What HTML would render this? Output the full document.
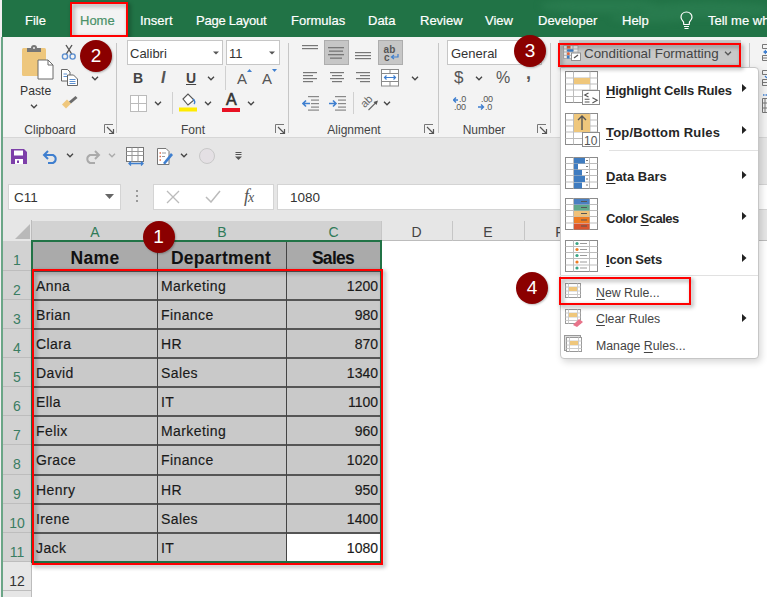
<!DOCTYPE html><html><head><meta charset="utf-8"><style>
*{margin:0;padding:0;box-sizing:border-box}
html,body{width:767px;height:597px;overflow:hidden;background:#fff;font-family:"Liberation Sans",sans-serif;position:relative}
.a{position:absolute}
.t{position:absolute;white-space:nowrap;line-height:1}
.tab{position:absolute;top:13.5px;font-size:13px;color:#fff;white-space:nowrap;line-height:1;-webkit-text-stroke:0.2px currentColor}
.glabel{position:absolute;top:124px;font-size:12px;color:#444;white-space:nowrap;line-height:1}
.circ{position:absolute;border-radius:50%;background:#8b0000;color:#fff;font-size:19px;text-align:center;box-shadow:1px 1px 2px rgba(0,0,0,.25)}
.redbox{position:absolute;border:2px solid #f00;filter:drop-shadow(2px 2px 2px rgba(0,0,0,.45))}
.cell{position:absolute;font-size:14px;color:#1a1a1a;white-space:nowrap;line-height:1;-webkit-text-stroke:0.15px #1a1a1a}
.mi{position:absolute;font-size:13px;font-weight:bold;color:#262626;white-space:nowrap;line-height:1}
.mi2{position:absolute;font-size:12.3px;color:#444;white-space:nowrap;line-height:1}
u{text-decoration:underline;text-underline-offset:2px}
</style></head><body>
<div class="a" style="left:0px;top:0px;width:767px;height:597px;background:#f2eff2"></div>
<div class="a" style="left:1.5px;top:0px;width:766px;height:37px;background:#217346"></div>
<div class="a" style="left:520px;top:0;width:247px;height:36px;overflow:hidden"><svg width="247" height="36" style="filter:blur(3px)"><g fill="#2b7d51" opacity="0.8"><ellipse cx="80" cy="6" rx="60" ry="7"/><ellipse cx="190" cy="10" rx="70" ry="8"/><ellipse cx="130" cy="18" rx="40" ry="4"/></g></svg></div>
<div class="tab" style="left:25px">File</div>
<div class="tab" style="left:140px">Insert</div>
<div class="tab" style="left:196px;letter-spacing:-0.25px">Page Layout</div>
<div class="tab" style="left:291px">Formulas</div>
<div class="tab" style="left:368px">Data</div>
<div class="tab" style="left:420px">Review</div>
<div class="tab" style="left:485px">View</div>
<div class="tab" style="left:538px">Developer</div>
<div class="tab" style="left:622px">Help</div>
<div class="tab" style="left:708px">Tell me wh</div>
<svg class="a" style="left:680px;top:11px;" width="13" height="19" viewBox="0 0 13 19"><path d="M6.5 1 C3 1 1 3.5 1 6.3 C1 8.5 2.5 9.8 3.5 11 L3.8 13.5 L9.2 13.5 L9.5 11 C10.5 9.8 12 8.5 12 6.3 C12 3.5 10 1 6.5 1 Z M4 15.5 H9 M4.5 17.5 H8.5" fill="none" stroke="#fff" stroke-width="1.2"/></svg>
<div class="a" style="left:71px;top:3px;width:56px;height:34px;background:#f3f3f3"></div>
<div class="tab" style="left:80px;color:#4a9169">Home</div>
<div class="redbox" style="left:70px;top:2px;width:58px;height:35px"></div>
<div class="a" style="left:1px;top:37px;width:2px;height:560px;background:#6aa586"></div>
<div class="a" style="left:3px;top:37px;width:764px;height:101px;background:#f3f3f3;border-bottom:1px solid #d6d6d6"></div>
<div class="a" style="left:116px;top:43px;width:1px;height:90px;background:#c6c6c6"></div>
<div class="a" style="left:288px;top:43px;width:1px;height:90px;background:#c6c6c6"></div>
<div class="a" style="left:438px;top:43px;width:1px;height:90px;background:#c6c6c6"></div>
<div class="a" style="left:550px;top:43px;width:1px;height:90px;background:#c6c6c6"></div>
<div class="a" style="left:749px;top:43px;width:1px;height:90px;background:#c6c6c6"></div>
<div class="glabel" style="left:50px;transform:translateX(-50%)">Clipboard</div>
<div class="glabel" style="left:193px;transform:translateX(-50%)">Font</div>
<div class="glabel" style="left:354px;transform:translateX(-50%)">Alignment</div>
<div class="glabel" style="left:484px;transform:translateX(-50%)">Number</div>
<svg class="a" style="left:104px;top:124px;" width="11" height="10" viewBox="0 0 11 10"><path d="M0.5 9 V0.5 H9" fill="none" stroke="#777" stroke-width="1"/><path d="M3 3 L9 9 M9.5 5 V9.5 H5" fill="none" stroke="#555" stroke-width="1.2"/></svg>
<svg class="a" style="left:275px;top:124px;" width="11" height="10" viewBox="0 0 11 10"><path d="M0.5 9 V0.5 H9" fill="none" stroke="#777" stroke-width="1"/><path d="M3 3 L9 9 M9.5 5 V9.5 H5" fill="none" stroke="#555" stroke-width="1.2"/></svg>
<svg class="a" style="left:424px;top:124px;" width="11" height="10" viewBox="0 0 11 10"><path d="M0.5 9 V0.5 H9" fill="none" stroke="#777" stroke-width="1"/><path d="M3 3 L9 9 M9.5 5 V9.5 H5" fill="none" stroke="#555" stroke-width="1.2"/></svg>
<svg class="a" style="left:537px;top:124px;" width="11" height="10" viewBox="0 0 11 10"><path d="M0.5 9 V0.5 H9" fill="none" stroke="#777" stroke-width="1"/><path d="M3 3 L9 9 M9.5 5 V9.5 H5" fill="none" stroke="#555" stroke-width="1.2"/></svg>
<svg class="a" style="left:20px;top:44px;" width="36" height="36" viewBox="0 0 36 36">
<rect x="2" y="4" width="24" height="28" rx="1.5" fill="#eec77d"/>
<path d="M7 8 V4 H11 A3 3 0 0 1 17 4 H21 V8 Z" fill="#767676"/><circle cx="14" cy="4" r="1" fill="#eee"/>
<path d="M18 16 H28 L33 21 V35 H18 Z" fill="#fff" stroke="#6b6b6b" stroke-width="1"/>
<path d="M28 16 V21 H33" fill="none" stroke="#6b6b6b" stroke-width="1"/></svg>
<div class="t" style="left:20px;top:84.5px;font-size:12.2px;color:#333">Paste</div>
<svg class="a" style="left:30px;top:103px;" width="8" height="6" viewBox="0 0 8 6"><path d="M1 1.8 L4 4.8 L7 1.8" fill="none" stroke="#444" stroke-width="1.3"/></svg>
<svg class="a" style="left:60px;top:43px;" width="18" height="18" viewBox="0 0 18 18"><path d="M6 2 L12 11.5 M12 2 L6 11.5" stroke="#555" stroke-width="1.4" fill="none"/><circle cx="5" cy="13.5" r="2.6" fill="none" stroke="#5b8fd0" stroke-width="1.4"/><circle cx="12.6" cy="13.5" r="2.6" fill="none" stroke="#5b8fd0" stroke-width="1.4"/></svg>
<svg class="a" style="left:61px;top:69px;" width="18" height="18" viewBox="0 0 18 18"><path d="M0.5 0.5 H6.5 L9 3 V12 H0.5 Z" fill="#fff" stroke="#666" stroke-width="1"/><path d="M2.5 5 H6 M2.5 7.5 H6" stroke="#5b8fd0" stroke-width="1"/><path d="M6.5 6 H12.5 L16.5 10 V16.5 H6.5 Z" fill="#fff" stroke="#666" stroke-width="1"/><path d="M8.5 10.5 H14.5 M8.5 12.5 H14.5 M8.5 14.5 H14.5" stroke="#5b8fd0" stroke-width="1"/></svg>
<svg class="a" style="left:61px;top:95px;" width="18" height="16" viewBox="0 0 18 16"><path d="M1 9.5 L6 4.5 L10 8.5 L5 13.5 Z" fill="#efc77c"/><path d="M8 6.5 L14.5 1 L16.5 3 L10 8.5 Z" fill="#6b6b6b"/></svg>
<svg class="a" style="left:91px;top:75px;" width="8" height="6" viewBox="0 0 8 6"><path d="M1 1.8 L4 4.8 L7 1.8" fill="none" stroke="#444" stroke-width="1.3"/></svg>
<div class="circ" style="left:80px;top:40px;width:32px;height:32px;line-height:32px">2</div>
<div class="a" style="left:127px;top:40px;width:96px;height:25px;background:#fff;border:1px solid #c6c6c6"></div>
<div class="t" style="left:130px;top:47px;font-size:13px;color:#333">Calibri</div>
<svg class="a" style="left:213px;top:51px;" width="6" height="4" viewBox="0 0 6 4"><path d="M0 0.5 H6 L3 3.5 Z" fill="#555"/></svg>
<div class="a" style="left:226px;top:40px;width:54px;height:25px;background:#fff;border:1px solid #c6c6c6"></div>
<div class="t" style="left:229px;top:47px;font-size:13px;color:#333">11</div>
<svg class="a" style="left:269px;top:51px;" width="6" height="4" viewBox="0 0 6 4"><path d="M0 0.5 H6 L3 3.5 Z" fill="#555"/></svg>
<div class="t" style="left:133px;top:71px;font-size:14px;font-weight:bold;color:#444">B</div>
<div class="t" style="left:161px;top:70px;font-size:16px;font-style:italic;font-weight:bold;color:#555">I</div>
<div class="t" style="left:186px;top:71px;font-size:14px;font-weight:bold;color:#444;text-decoration:underline">U</div>
<svg class="a" style="left:207px;top:75px;" width="8" height="6" viewBox="0 0 8 6"><path d="M1 1.8 L4 4.8 L7 1.8" fill="none" stroke="#444" stroke-width="1.3"/></svg>
<div class="a" style="left:225px;top:66px;width:1px;height:24px;background:#d0d0d0"></div>
<div class="t" style="left:237px;top:71px;font-size:15px;color:#555">A</div>
<svg class="a" style="left:247px;top:69px;" width="5" height="3" viewBox="0 0 5 3"><path d="M0 3 L2.5 0 L5 3 Z" fill="#3f7fcf"/></svg>
<div class="t" style="left:262px;top:71px;font-size:15px;color:#555">A</div>
<svg class="a" style="left:272px;top:69px;" width="5" height="3" viewBox="0 0 5 3"><path d="M0 0 L2.5 3 L5 0 Z" fill="#3f7fcf"/></svg>
<svg class="a" style="left:130px;top:95px;" width="17" height="17" viewBox="0 0 17 17"><rect x="0.5" y="0.5" width="16" height="16" fill="#fff" stroke="#bbb"/><path d="M8.5 0.5 V16.5 M0.5 8.5 H16.5" stroke="#bbb"/></svg>
<svg class="a" style="left:154px;top:100px;" width="8" height="6" viewBox="0 0 8 6"><path d="M1 1.8 L4 4.8 L7 1.8" fill="none" stroke="#444" stroke-width="1.3"/></svg>
<div class="a" style="left:172px;top:92px;width:1px;height:22px;background:#d0d0d0"></div>
<svg class="a" style="left:179px;top:93px;" width="18" height="19" viewBox="0 0 18 19"><path d="M4 6 L9 1 L15 7 L9 12 Z" fill="#fff" stroke="#555" stroke-width="1.1"/><path d="M14 6 Q17 9 15 11" fill="none" stroke="#3f7fcf" stroke-width="1.4"/><rect x="0" y="14.5" width="18" height="4" fill="#ffeb00"/></svg>
<svg class="a" style="left:204px;top:100px;" width="8" height="6" viewBox="0 0 8 6"><path d="M1 1.8 L4 4.8 L7 1.8" fill="none" stroke="#444" stroke-width="1.3"/></svg>
<div class="t" style="left:226px;top:92px;font-size:16px;color:#333;-webkit-text-stroke:0.6px #333">A</div>
<div class="a" style="left:222px;top:108px;width:18px;height:4px;background:#e81123"></div>
<svg class="a" style="left:247px;top:100px;" width="8" height="6" viewBox="0 0 8 6"><path d="M1 1.8 L4 4.8 L7 1.8" fill="none" stroke="#444" stroke-width="1.3"/></svg>
<svg class="a" style="left:302px;top:45px;" width="16" height="6" viewBox="0 0 16 6"><rect x="0.0" y="0" width="16" height="1.2" fill="#777"/><rect x="0.0" y="3" width="16" height="1.2" fill="#777"/></svg>
<div class="a" style="left:324px;top:40px;width:25px;height:25px;background:#c6c6c6;border:1px solid #adadad"></div>
<svg class="a" style="left:328px;top:47px;" width="16" height="13" viewBox="0 0 16 13"><rect x="0" y="0" width="16" height="1.3" fill="#777"/><rect x="1" y="3.5" width="14" height="1.3" fill="#777"/><rect x="0" y="7" width="16" height="1.3" fill="#777"/><rect x="2" y="10.5" width="12" height="1.3" fill="#777"/></svg>
<svg class="a" style="left:355px;top:52px;" width="16" height="9" viewBox="0 0 16 9"><rect x="0.0" y="0" width="16" height="1.2" fill="#777"/><rect x="0.0" y="3" width="16" height="1.2" fill="#777"/><rect x="0.0" y="6" width="16" height="1.2" fill="#777"/></svg>
<div class="a" style="left:378px;top:40px;width:25px;height:25px;background:#c6c6c6;border:1px solid #adadad"></div>
<div class="t" style="left:383.5px;top:45px;font-size:10px;font-weight:bold;color:#555;letter-spacing:0.3px">ab</div>
<div class="t" style="left:384px;top:53px;font-size:10px;font-weight:bold;color:#555">c</div>
<svg class="a" style="left:390px;top:54px;" width="9" height="7" viewBox="0 0 9 7"><path d="M8 0 V3 H2 M4 1 L1.5 3 L4 5" fill="none" stroke="#3f7fcf" stroke-width="1.2"/></svg>
<svg class="a" style="left:303px;top:72px;" width="14" height="12" viewBox="0 0 14 12"><rect x="0" y="0" width="14" height="1.2" fill="#777"/><rect x="0" y="3" width="10" height="1.2" fill="#777"/><rect x="0" y="6" width="14" height="1.2" fill="#777"/><rect x="0" y="9" width="10" height="1.2" fill="#777"/></svg>
<svg class="a" style="left:330px;top:72px;" width="14" height="12" viewBox="0 0 14 12"><rect x="0.0" y="0" width="14" height="1.2" fill="#777"/><rect x="2.0" y="3" width="10" height="1.2" fill="#777"/><rect x="0.0" y="6" width="14" height="1.2" fill="#777"/><rect x="2.0" y="9" width="10" height="1.2" fill="#777"/></svg>
<svg class="a" style="left:356px;top:72px;" width="14" height="12" viewBox="0 0 14 12"><rect x="0" y="0" width="14" height="1.2" fill="#777"/><rect x="4" y="3" width="10" height="1.2" fill="#777"/><rect x="0" y="6" width="14" height="1.2" fill="#777"/><rect x="4" y="9" width="10" height="1.2" fill="#777"/></svg>
<svg class="a" style="left:381px;top:69px;" width="18" height="18" viewBox="0 0 18 18"><rect x="0.5" y="0.5" width="17" height="16.5" fill="#fff" stroke="#8a8a8a"/><path d="M0.5 4.5 H17.5 M0.5 12.5 H17.5 M9 0.5 V4.5 M9 12.5 V17" stroke="#8a8a8a"/><path d="M3.5 8.5 H14.5 M5.5 6.5 L3.5 8.5 L5.5 10.5 M12.5 6.5 L14.5 8.5 L12.5 10.5" fill="none" stroke="#3f7fcf" stroke-width="1.2"/></svg>
<svg class="a" style="left:411px;top:75px;" width="8" height="6" viewBox="0 0 8 6"><path d="M1 1.8 L4 4.8 L7 1.8" fill="none" stroke="#444" stroke-width="1.3"/></svg>
<svg class="a" style="left:302px;top:96px;" width="17" height="15" viewBox="0 0 17 15"><rect x="6" y="0" width="11" height="1.2" fill="#888"/><rect x="9" y="3.5" width="8" height="1.2" fill="#888"/><rect x="9" y="7" width="8" height="1.2" fill="#888"/><rect x="9" y="10.5" width="8" height="1.2" fill="#888"/><rect x="6" y="13.5" width="11" height="1.2" fill="#888"/><path d="M8 7.5 H1 M4 4.5 L1 7.5 L4 10.5" fill="none" stroke="#3f7fcf" stroke-width="1.6"/></svg>
<svg class="a" style="left:329px;top:96px;" width="17" height="15" viewBox="0 0 17 15"><rect x="6" y="0" width="11" height="1.2" fill="#888"/><rect x="9" y="3.5" width="8" height="1.2" fill="#888"/><rect x="9" y="7" width="8" height="1.2" fill="#888"/><rect x="9" y="10.5" width="8" height="1.2" fill="#888"/><rect x="6" y="13.5" width="11" height="1.2" fill="#888"/><path d="M0 7.5 H7 M4 4.5 L7 7.5 L4 10.5" fill="none" stroke="#3f7fcf" stroke-width="1.6"/></svg>
<div class="a" style="left:353px;top:92px;width:1px;height:22px;background:#d0d0d0"></div>
<svg class="a" style="left:355px;top:90px;" width="26" height="24" viewBox="0 0 26 24"><text x="11.5" y="15" font-size="11" fill="#666" font-family="Liberation Sans" text-anchor="middle" transform="rotate(-45 11.5 11.5)">ab</text><path d="M13.5 20 L21 12.5" fill="none" stroke="#666" stroke-width="1.1"/><path d="M23 10.5 L18.5 12 L21.5 15 Z" fill="#555"/></svg>
<svg class="a" style="left:383px;top:100px;" width="8" height="6" viewBox="0 0 8 6"><path d="M1 1.8 L4 4.8 L7 1.8" fill="none" stroke="#444" stroke-width="1.3"/></svg>
<div class="a" style="left:447px;top:40px;width:95px;height:25px;background:#fff;border:1px solid #c6c6c6"></div>
<div class="t" style="left:451px;top:47px;font-size:13px;color:#333">General</div>
<div class="t" style="left:454px;top:69px;font-size:17px;color:#555">$</div>
<svg class="a" style="left:475px;top:75px;" width="8" height="6" viewBox="0 0 8 6"><path d="M1 1.8 L4 4.8 L7 1.8" fill="none" stroke="#444" stroke-width="1.3"/></svg>
<div class="t" style="left:496px;top:70px;font-size:16px;color:#555">%</div>
<div class="t" style="left:526px;top:64px;font-size:18px;font-weight:bold;color:#555">,</div>
<div class="t" style="left:459px;top:95px;font-size:9px;color:#555;letter-spacing:-0.3px">.0</div>
<div class="t" style="left:454px;top:103px;font-size:9px;color:#555;letter-spacing:-0.3px">.00</div>
<svg class="a" style="left:453px;top:97px;" width="6" height="6" viewBox="0 0 6 6"><path d="M5 3 H0.5 M3 0.5 L0.5 3 L3 5.5" fill="none" stroke="#3f7fcf" stroke-width="1.4"/></svg>
<div class="t" style="left:481px;top:95px;font-size:9px;color:#555;letter-spacing:-0.3px">.00</div>
<div class="t" style="left:485px;top:103px;font-size:9px;color:#555;letter-spacing:-0.3px">.0</div>
<svg class="a" style="left:478px;top:104px;" width="7" height="6" viewBox="0 0 7 6"><path d="M0 3 H5.5 M3 0.5 L5.5 3 L3 5.5" fill="none" stroke="#3f7fcf" stroke-width="1.4"/></svg>
<div class="circ" style="left:514px;top:35px;width:32px;height:32px;line-height:32px">3</div>
<div class="a" style="left:559px;top:40px;width:182px;height:27px;background:#c8c8c8"></div>
<svg class="a" style="left:563px;top:45px;" width="18" height="16" viewBox="0 0 18 16"><path d="M0.5 0.5 H15 V13.5 H0.5 Z M0.5 4 H15 M0.5 7 H15 M0.5 10.3 H15 M4 0.5 V13.5 M10 0.5 V13.5" fill="#f4f4f4" stroke="#aaa" stroke-width="0.9"/><rect x="4" y="0.8" width="3.5" height="2.8" fill="#e0653e"/><rect x="4" y="4.2" width="6.5" height="2.6" rx="1" fill="#3f7cc0"/><rect x="4" y="7.3" width="2.8" height="2.8" rx="1.2" fill="#e0653e"/><rect x="4" y="10.5" width="2.6" height="3" fill="#3f7cc0"/><rect x="8.5" y="8" width="9" height="7.5" fill="#fff" stroke="#888" stroke-width="0.9"/><path d="M11 13 L15 10" stroke="#555" stroke-width="1.3"/></svg>
<div class="t" style="left:584px;top:46.5px;font-size:13.4px;color:#444">Conditional Formatting</div>
<svg class="a" style="left:724px;top:50px;" width="8" height="6" viewBox="0 0 8 6"><path d="M1 1.8 L4 4.8 L7 1.8" fill="none" stroke="#555" stroke-width="1.3"/></svg>
<svg class="a" style="left:762px;top:44px;" width="5" height="17" viewBox="0 0 5 17"><path d="M0.5 0.5 H5 M0.5 4.5 H5 M0.5 0.5 V4.5" stroke="#777" fill="none"/><path d="M1 8 L4 5.5 V10.5 Z" fill="#3f7fcf"/><rect x="3" y="7" width="2" height="2" fill="#3f7fcf"/><path d="M0.5 11.5 H5 M0.5 16.5 H5 M0.5 11.5 V16.5 M0.5 14 H5" stroke="#777" fill="none"/></svg>
<svg class="a" style="left:762px;top:70px;" width="5" height="16" viewBox="0 0 5 16"><path d="M0.5 0.5 H5 M0.5 4.5 H5 M0.5 0.5 V4.5" stroke="#777" fill="none"/><path d="M3 6 L5 8" stroke="#3f7fcf" stroke-width="1.2"/><path d="M0.5 9.5 H5 M0.5 15.5 H5 M0.5 9.5 V15.5 M0.5 12.5 H5" stroke="#777" fill="none"/></svg>
<svg class="a" style="left:762px;top:94px;" width="5" height="19" viewBox="0 0 5 19"><path d="M1 1 H5" stroke="#3f7fcf" stroke-width="1.5" stroke-dasharray="1.5 1"/><path d="M0.5 4.5 H5 M0.5 18.5 H5 M0.5 4.5 V18.5 M0.5 9 H5 M0.5 14 H5 M3 4.5 V18.5" stroke="#777" fill="none"/></svg>
<div class="a" style="left:3px;top:138px;width:764px;height:82px;background:#e6e6e6"></div>
<svg class="a" style="left:11px;top:149px;" width="16" height="15" viewBox="0 0 16 15"><path d="M0 0 H13 L16 3 V15 H0 Z" fill="#7d3fa9"/><rect x="3" y="1.5" width="9" height="5" fill="#fff"/><rect x="4" y="10" width="8" height="5" fill="#fff"/><rect x="6" y="11.5" width="2" height="2.5" fill="#7d3fa9"/></svg>
<svg class="a" style="left:42px;top:150px;" width="17" height="14" viewBox="0 0 17 14"><path d="M3 5 H11 A5 4.5 0 0 1 11 13 H6" fill="none" stroke="#3f7fcf" stroke-width="2"/><path d="M6 1 L2 5 L6 9" fill="none" stroke="#3f7fcf" stroke-width="2"/></svg>
<svg class="a" style="left:66px;top:152px;" width="8" height="6" viewBox="0 0 8 6"><path d="M1 1.8 L4 4.8 L7 1.8" fill="none" stroke="#444" stroke-width="1.3"/></svg>
<svg class="a" style="left:84px;top:150px;" width="17" height="14" viewBox="0 0 17 14"><path d="M14 5 H6 A5 4.5 0 0 0 6 13 H11" fill="none" stroke="#aaa" stroke-width="2"/><path d="M11 1 L15 5 L11 9" fill="none" stroke="#aaa" stroke-width="2"/></svg>
<svg class="a" style="left:108px;top:152px;" width="8" height="6" viewBox="0 0 8 6"><path d="M1 1.8 L4 4.8 L7 1.8" fill="none" stroke="#aaa" stroke-width="1.3"/></svg>
<svg class="a" style="left:126px;top:147px;" width="20" height="19" viewBox="0 0 20 19"><rect x="0.5" y="0.5" width="17" height="14" fill="#fff" stroke="#777"/><path d="M0.5 4.5 H17.5 M0.5 8.5 H17.5 M6 0.5 V14.5 M12 0.5 V14.5" stroke="#999"/><path d="M3 16.5 H17 M5 14.5 L3 16.5 L5 18.5 M15 14.5 L17 16.5 L15 18.5" fill="none" stroke="#3f7fcf" stroke-width="1.3"/></svg>
<svg class="a" style="left:157px;top:148px;" width="16" height="17" viewBox="0 0 16 17"><path d="M0.5 0.5 H9 L12 3.5 V16.5 H0.5 Z" fill="#fff" stroke="#777"/><path d="M2.5 5 H4 M2.5 8.5 H4 M2.5 12 H4" stroke="#e07050" stroke-width="1.3"/><path d="M5 5 H9 M5 8.5 H8" stroke="#999"/><path d="M6 15 L14 5 L16 7 L8 16.5 Z" fill="#3f7fcf"/></svg>
<svg class="a" style="left:180px;top:152px;" width="8" height="6" viewBox="0 0 8 6"><path d="M1 1.8 L4 4.8 L7 1.8" fill="none" stroke="#444" stroke-width="1.3"/></svg>
<div class="a" style="left:199px;top:148px;width:16px;height:16px;border-radius:50%;background:#e4e0e4;border:1px solid #c8c8c8"></div>
<svg class="a" style="left:235px;top:152px;" width="7" height="8" viewBox="0 0 7 8"><path d="M0.5 0.5 H6.5 M0.5 2.5 H6.5" stroke="#555" stroke-width="1"/><path d="M0 4.5 H7 L3.5 8 Z" fill="#555"/></svg>
<div class="a" style="left:8px;top:184px;width:113px;height:26px;background:#fff;border:1px solid #d4d4d4"></div>
<div class="t" style="left:14px;top:191px;font-size:13.5px;color:#333">C11</div>
<svg class="a" style="left:105px;top:194px;" width="9" height="5" viewBox="0 0 9 5"><path d="M0 0 H9 L4.5 5 Z" fill="#666"/></svg>
<div class="a" style="left:136px;top:190px;width:2px;height:2px;background:#999"></div>
<div class="a" style="left:136px;top:195px;width:2px;height:2px;background:#999"></div>
<div class="a" style="left:136px;top:200px;width:2px;height:2px;background:#999"></div>
<div class="a" style="left:153px;top:184px;width:121px;height:26px;background:#fff;border:1px solid #d4d4d4"></div>
<svg class="a" style="left:166px;top:190px;" width="14" height="14" viewBox="0 0 14 14"><path d="M1 1 L13 13 M13 1 L1 13" stroke="#bbb" stroke-width="1.3"/></svg>
<svg class="a" style="left:205px;top:190px;" width="16" height="13" viewBox="0 0 16 13"><path d="M1 7 L6 12 L15 1" fill="none" stroke="#bbb" stroke-width="1.5"/></svg>
<div class="t" style="left:244px;top:187px;font-size:18px;color:#555;font-family:'Liberation Serif';letter-spacing:-1px"><i>f</i><span style='font-size:14px'><i>x</i></span></div>
<div class="a" style="left:277px;top:184px;width:490px;height:26px;background:#fff;border:1px solid #d4d4d4;border-right:none"></div>
<div class="t" style="left:290px;top:191px;font-size:13.5px;color:#333">1080</div>
<div class="a" style="left:3px;top:220px;width:764px;height:377px;background:#fff"></div>
<div class="a" style="left:3px;top:220px;width:764px;height:21px;background:#e6e6e6"></div>
<div class="a" style="left:3px;top:240px;width:764px;height:1px;background:#bcbcbc"></div>
<div class="a" style="left:3px;top:220px;width:29px;height:21px;background:#e6e6e6"></div>
<svg class="a" style="left:15px;top:224px;" width="15" height="15" viewBox="0 0 15 15"><path d="M15 0 V15 H0 Z" fill="#b9b9b9"/></svg>
<div class="a" style="left:32px;top:221px;width:126px;height:20px;background:#d2d2d2"></div>
<div class="a" style="left:158px;top:221px;width:1px;height:20px;background:#c6c6c6"></div>
<div class="t" style="left:95.0px;top:225px;font-size:14px;color:#2f7a58;transform:translateX(-50%)">A</div>
<div class="a" style="left:158px;top:221px;width:128px;height:20px;background:#d2d2d2"></div>
<div class="a" style="left:286px;top:221px;width:1px;height:20px;background:#c6c6c6"></div>
<div class="t" style="left:222.0px;top:225px;font-size:14px;color:#2f7a58;transform:translateX(-50%)">B</div>
<div class="a" style="left:286px;top:221px;width:95px;height:20px;background:#d2d2d2"></div>
<div class="a" style="left:381px;top:221px;width:1px;height:20px;background:#c6c6c6"></div>
<div class="t" style="left:333.5px;top:225px;font-size:14px;color:#2f7a58;transform:translateX(-50%)">C</div>
<div class="a" style="left:452px;top:221px;width:1px;height:20px;background:#c6c6c6"></div>
<div class="t" style="left:416.5px;top:225px;font-size:14px;color:#444;transform:translateX(-50%)">D</div>
<div class="a" style="left:524px;top:221px;width:1px;height:20px;background:#c6c6c6"></div>
<div class="t" style="left:488.0px;top:225px;font-size:14px;color:#444;transform:translateX(-50%)">E</div>
<div class="a" style="left:595px;top:221px;width:1px;height:20px;background:#c6c6c6"></div>
<div class="t" style="left:559.5px;top:225px;font-size:14px;color:#444;transform:translateX(-50%)">F</div>
<div class="a" style="left:3px;top:241px;width:28.5px;height:356px;background:#e6e6e6"></div>
<div class="a" style="left:31px;top:220px;width:1px;height:377px;background:#bcbcbc"></div>
<div class="a" style="left:3px;top:241px;width:28px;height:30px;background:#d2d2d2"></div>
<div class="a" style="left:3px;top:270px;width:28px;height:1px;background:#bdbdbd"></div>
<div class="t" style="left:17px;top:253px;font-size:14px;color:#3a7d62;transform:translateX(-50%)">1</div>
<div class="a" style="left:3px;top:271px;width:28px;height:29px;background:#d2d2d2"></div>
<div class="a" style="left:3px;top:299px;width:28px;height:1px;background:#bdbdbd"></div>
<div class="t" style="left:17px;top:283px;font-size:14px;color:#3a7d62;transform:translateX(-50%)">2</div>
<div class="a" style="left:3px;top:300px;width:28px;height:29px;background:#d2d2d2"></div>
<div class="a" style="left:3px;top:328px;width:28px;height:1px;background:#bdbdbd"></div>
<div class="t" style="left:17px;top:312px;font-size:14px;color:#3a7d62;transform:translateX(-50%)">3</div>
<div class="a" style="left:3px;top:329px;width:28px;height:29px;background:#d2d2d2"></div>
<div class="a" style="left:3px;top:357px;width:28px;height:1px;background:#bdbdbd"></div>
<div class="t" style="left:17px;top:341px;font-size:14px;color:#3a7d62;transform:translateX(-50%)">4</div>
<div class="a" style="left:3px;top:358px;width:28px;height:29px;background:#d2d2d2"></div>
<div class="a" style="left:3px;top:386px;width:28px;height:1px;background:#bdbdbd"></div>
<div class="t" style="left:17px;top:370px;font-size:14px;color:#3a7d62;transform:translateX(-50%)">5</div>
<div class="a" style="left:3px;top:387px;width:28px;height:29px;background:#d2d2d2"></div>
<div class="a" style="left:3px;top:415px;width:28px;height:1px;background:#bdbdbd"></div>
<div class="t" style="left:17px;top:399px;font-size:14px;color:#3a7d62;transform:translateX(-50%)">6</div>
<div class="a" style="left:3px;top:416px;width:28px;height:29px;background:#d2d2d2"></div>
<div class="a" style="left:3px;top:444px;width:28px;height:1px;background:#bdbdbd"></div>
<div class="t" style="left:17px;top:428px;font-size:14px;color:#3a7d62;transform:translateX(-50%)">7</div>
<div class="a" style="left:3px;top:445px;width:28px;height:30px;background:#d2d2d2"></div>
<div class="a" style="left:3px;top:474px;width:28px;height:1px;background:#bdbdbd"></div>
<div class="t" style="left:17px;top:457px;font-size:14px;color:#3a7d62;transform:translateX(-50%)">8</div>
<div class="a" style="left:3px;top:475px;width:28px;height:29px;background:#d2d2d2"></div>
<div class="a" style="left:3px;top:503px;width:28px;height:1px;background:#bdbdbd"></div>
<div class="t" style="left:17px;top:487px;font-size:14px;color:#3a7d62;transform:translateX(-50%)">9</div>
<div class="a" style="left:3px;top:504px;width:28px;height:29px;background:#d2d2d2"></div>
<div class="a" style="left:3px;top:532px;width:28px;height:1px;background:#bdbdbd"></div>
<div class="t" style="left:17px;top:516px;font-size:14px;color:#3a7d62;transform:translateX(-50%)">10</div>
<div class="a" style="left:3px;top:533px;width:28px;height:29px;background:#d2d2d2"></div>
<div class="a" style="left:3px;top:561px;width:28px;height:1px;background:#bdbdbd"></div>
<div class="t" style="left:17px;top:545px;font-size:14px;color:#3a7d62;transform:translateX(-50%)">11</div>
<div class="a" style="left:3px;top:590px;width:28px;height:1px;background:#bdbdbd"></div>
<div class="t" style="left:17px;top:574px;font-size:14px;color:#333;transform:translateX(-50%)">12</div>
<div class="a" style="left:32px;top:241px;width:349px;height:30px;background:#aaaaaa"></div>
<div class="a" style="left:32px;top:271px;width:349px;height:29px;background:#c9c9c9"></div>
<div class="a" style="left:32px;top:300px;width:349px;height:29px;background:#c9c9c9"></div>
<div class="a" style="left:32px;top:329px;width:349px;height:29px;background:#c9c9c9"></div>
<div class="a" style="left:32px;top:358px;width:349px;height:29px;background:#c9c9c9"></div>
<div class="a" style="left:32px;top:387px;width:349px;height:29px;background:#c9c9c9"></div>
<div class="a" style="left:32px;top:416px;width:349px;height:29px;background:#c9c9c9"></div>
<div class="a" style="left:32px;top:445px;width:349px;height:30px;background:#c9c9c9"></div>
<div class="a" style="left:32px;top:475px;width:349px;height:29px;background:#c9c9c9"></div>
<div class="a" style="left:32px;top:504px;width:349px;height:29px;background:#c9c9c9"></div>
<div class="a" style="left:32px;top:533px;width:349px;height:29px;background:#c9c9c9"></div>
<div class="a" style="left:287px;top:533px;width:94px;height:29px;background:#fff"></div>
<div class="a" style="left:32px;top:270px;width:349px;height:1.5px;background:#555"></div>
<div class="a" style="left:32px;top:299px;width:349px;height:1.5px;background:#555"></div>
<div class="a" style="left:32px;top:328px;width:349px;height:1.5px;background:#555"></div>
<div class="a" style="left:32px;top:357px;width:349px;height:1.5px;background:#555"></div>
<div class="a" style="left:32px;top:386px;width:349px;height:1.5px;background:#555"></div>
<div class="a" style="left:32px;top:415px;width:349px;height:1.5px;background:#555"></div>
<div class="a" style="left:32px;top:444px;width:349px;height:1.5px;background:#555"></div>
<div class="a" style="left:32px;top:474px;width:349px;height:1.5px;background:#555"></div>
<div class="a" style="left:32px;top:503px;width:349px;height:1.5px;background:#555"></div>
<div class="a" style="left:32px;top:532px;width:349px;height:1.5px;background:#555"></div>
<div class="a" style="left:32px;top:561px;width:349px;height:1.5px;background:#555"></div>
<div class="t" style="left:95px;top:250px;font-size:17.5px;font-weight:bold;color:#111;transform:translateX(-50%);letter-spacing:0.3px">Name</div>
<div class="t" style="left:221px;top:250px;font-size:17.5px;font-weight:bold;color:#111;transform:translateX(-50%);letter-spacing:0.3px">Department</div>
<div class="t" style="left:333px;top:250px;font-size:17.5px;font-weight:bold;color:#111;transform:translateX(-50%);letter-spacing:-0.7px">Sales</div>
<div class="cell" style="left:36px;top:279px;letter-spacing:0.4px">Anna</div>
<div class="cell" style="left:161px;top:279px;letter-spacing:0.4px">Marketing</div>
<div class="cell" style="right:389px;top:279px">1200</div>
<div class="cell" style="left:36px;top:308px;letter-spacing:0.4px">Brian</div>
<div class="cell" style="left:161px;top:308px;letter-spacing:0.4px">Finance</div>
<div class="cell" style="right:389px;top:308px">980</div>
<div class="cell" style="left:36px;top:337px;letter-spacing:0.4px">Clara</div>
<div class="cell" style="left:161px;top:337px;letter-spacing:0.4px">HR</div>
<div class="cell" style="right:389px;top:337px">870</div>
<div class="cell" style="left:36px;top:366px;letter-spacing:0.4px">David</div>
<div class="cell" style="left:161px;top:366px;letter-spacing:0.4px">Sales</div>
<div class="cell" style="right:389px;top:366px">1340</div>
<div class="cell" style="left:36px;top:395px;letter-spacing:0.4px">Ella</div>
<div class="cell" style="left:161px;top:395px;letter-spacing:0.4px">IT</div>
<div class="cell" style="right:389px;top:395px">1100</div>
<div class="cell" style="left:36px;top:424px;letter-spacing:0.4px">Felix</div>
<div class="cell" style="left:161px;top:424px;letter-spacing:0.4px">Marketing</div>
<div class="cell" style="right:389px;top:424px">960</div>
<div class="cell" style="left:36px;top:453px;letter-spacing:0.4px">Grace</div>
<div class="cell" style="left:161px;top:453px;letter-spacing:0.4px">Finance</div>
<div class="cell" style="right:389px;top:453px">1020</div>
<div class="cell" style="left:36px;top:483px;letter-spacing:0.4px">Henry</div>
<div class="cell" style="left:161px;top:483px;letter-spacing:0.4px">HR</div>
<div class="cell" style="right:389px;top:483px">950</div>
<div class="cell" style="left:36px;top:512px;letter-spacing:0.4px">Irene</div>
<div class="cell" style="left:161px;top:512px;letter-spacing:0.4px">Sales</div>
<div class="cell" style="right:389px;top:512px">1400</div>
<div class="cell" style="left:36px;top:541px;letter-spacing:0.4px">Jack</div>
<div class="cell" style="left:161px;top:541px;letter-spacing:0.4px">IT</div>
<div class="cell" style="right:389px;top:541px">1080</div>
<div class="a" style="left:157px;top:241px;width:1.2px;height:321px;background:#444"></div>
<div class="a" style="left:286px;top:241px;width:1.2px;height:321px;background:#444"></div>
<div class="a" style="left:31px;top:240px;width:351px;height:323px;border:2px solid #217346"></div>
<div class="redbox" style="left:32px;top:269px;width:351px;height:296px"></div>
<div class="circ" style="left:142.5px;top:221px;width:32px;height:32px;line-height:32px">1</div>
<div class="a" style="left:560px;top:67px;width:199px;height:292px;background:#fff;border:1px solid #c6c6c6;border-radius:0 4px 4px 4px;box-shadow:2px 3px 7px rgba(0,0,0,.16)"></div>
<svg class="a" style="left:565px;top:71px;" width="36" height="35" viewBox="0 0 36 35"><rect x="0.5" y="0.5" width="32" height="31" fill="#fff" stroke="#8c8c8c"/>
<path d="M8.5 0.5 V31.5 M25 0.5 V31.5 M0.5 7 H32.5 M0.5 13 H32.5 M0.5 19 H32.5 M0.5 25.5 H32.5" stroke="#bdbdbd"/>
<rect x="9" y="7" width="16" height="6" fill="#efc77c"/>
<rect x="17.5" y="19.5" width="17" height="14" fill="#fff" stroke="#8c8c8c"/>
<path d="M23.5 22 L19.7 24 L23.5 26 M19.7 28.3 H24.5 M19.7 31 H24.5 M27.4 26.7 L32.2 29.3 L27.4 31.9" fill="none" stroke="#555" stroke-width="1.1"/></svg>
<div class="mi" style="left:606px;top:84px;letter-spacing:-0.2px"><u>H</u>ighlight Cells Rules</div>
<svg class="a" style="left:565px;top:113px;" width="36" height="34" viewBox="0 0 36 34"><rect x="0.5" y="0.5" width="32" height="31" fill="#fff" stroke="#8c8c8c"/>
<path d="M8.5 0.5 V31.5 M25 0.5 V31.5 M0.5 7 H32.5 M0.5 13 H32.5 M0.5 19 H32.5 M0.5 25.5 H32.5" stroke="#bdbdbd"/>
<rect x="9" y="1" width="16" height="18" fill="#efc77c"/>
<path d="M17 17 V3 M13 7 L17 3 L21 7" fill="none" stroke="#555" stroke-width="1.4"/>
<rect x="17.5" y="19.5" width="17" height="14" fill="#fff" stroke="#8c8c8c"/>
<text x="19" y="32" font-size="12" fill="#555" font-family="Liberation Sans">10</text></svg>
<div class="mi" style="left:606px;top:126px;letter-spacing:0.2px"><u>T</u>op/Bottom Rules</div>
<div class="a" style="left:609px;top:150px;width:149px;height:1px;background:#e1e1e1"></div>
<svg class="a" style="left:565px;top:157px;" width="34" height="33" viewBox="0 0 34 33"><rect x="0.5" y="0.5" width="32" height="31" fill="#fff" stroke="#8c8c8c"/>
<path d="M8.5 0.5 V31.5 M24.5 0.5 V31.5 M0.5 6.5 H32.5 M0.5 12.5 H32.5 M0.5 18.5 H32.5 M0.5 25 H32.5" stroke="#bdbdbd"/>
<rect x="9" y="1" width="11" height="5.5" fill="#3f7cc0"/><rect x="9" y="7" width="4" height="5.5" fill="#3f7cc0"/><rect x="9" y="13" width="8" height="5.5" fill="#3f7cc0"/><rect x="9" y="19" width="11" height="6" fill="#3f7cc0"/><rect x="9" y="25.5" width="8" height="6" fill="#3f7cc0"/>
<path d="M21 3.5 H23 M21 9.5 H23 M21 15.5 H23 M21 22 H23 M21 28 H23" stroke="#777"/></svg>
<div class="mi" style="left:606px;top:170px"><u>D</u>ata Bars</div>
<svg class="a" style="left:565px;top:198px;" width="34" height="33" viewBox="0 0 34 33"><rect x="0.5" y="0.5" width="32" height="31" fill="#fff" stroke="#8c8c8c"/>
<path d="M8.5 0.5 V31.5 M24.5 0.5 V31.5 M0.5 6.5 H32.5 M0.5 12.5 H32.5 M0.5 18.5 H32.5 M0.5 25 H32.5" stroke="#bdbdbd"/>
<rect x="9" y="1" width="15.5" height="5.5" fill="#4a7fc1"/><rect x="9" y="7" width="15.5" height="5.5" fill="#5fa88a"/><rect x="9" y="13" width="15.5" height="5.5" fill="#f0c27a"/><rect x="9" y="19" width="15.5" height="6" fill="#ee7b22"/><rect x="9" y="25.5" width="15.5" height="6" fill="#d9542e"/>
<path d="M16 3.5 H22 M16 9.5 H22 M16 15.5 H22 M16 22 H22 M16 28 H22" stroke="#555" stroke-width="1"/></svg>
<div class="mi" style="left:606px;top:212px;letter-spacing:-0.5px">Color <u>S</u>cales</div>
<svg class="a" style="left:565px;top:240px;" width="34" height="33" viewBox="0 0 34 33"><rect x="0.5" y="0.5" width="32" height="31" fill="#fff" stroke="#8c8c8c"/>
<path d="M8.5 0.5 V31.5 M24.5 0.5 V31.5 M0.5 6.5 H32.5 M0.5 12.5 H32.5 M0.5 18.5 H32.5 M0.5 25 H32.5" stroke="#bdbdbd"/>
<circle cx="12" cy="3.5" r="1.6" fill="#3aa585"/><circle cx="12" cy="9.5" r="1.6" fill="#ee7b22"/><circle cx="12" cy="15.5" r="1.6" fill="#3aa585"/><circle cx="12" cy="22" r="1.6" fill="#ee7b22"/><circle cx="12" cy="28" r="1.6" fill="#3aa585"/>
<path d="M15 3.5 H22 M15 9.5 H22 M15 15.5 H22 M15 22 H22 M15 28 H22" stroke="#999" stroke-width="1"/></svg>
<div class="mi" style="left:606px;top:253px;letter-spacing:-0.2px"><u>I</u>con Sets</div>
<div class="a" style="left:560px;top:275px;width:198px;height:1px;background:#e1e1e1"></div>
<svg class="a" style="left:742px;top:84px;" width="5" height="8" viewBox="0 0 5 8"><path d="M0 0 L4.5 4 L0 8 Z" fill="#222"/></svg>
<svg class="a" style="left:742px;top:126px;" width="5" height="8" viewBox="0 0 5 8"><path d="M0 0 L4.5 4 L0 8 Z" fill="#222"/></svg>
<svg class="a" style="left:742px;top:171px;" width="5" height="8" viewBox="0 0 5 8"><path d="M0 0 L4.5 4 L0 8 Z" fill="#222"/></svg>
<svg class="a" style="left:742px;top:212px;" width="5" height="8" viewBox="0 0 5 8"><path d="M0 0 L4.5 4 L0 8 Z" fill="#222"/></svg>
<svg class="a" style="left:742px;top:254px;" width="5" height="8" viewBox="0 0 5 8"><path d="M0 0 L4.5 4 L0 8 Z" fill="#222"/></svg>
<svg class="a" style="left:742px;top:314px;" width="5" height="8" viewBox="0 0 5 8"><path d="M0 0 L4.5 4 L0 8 Z" fill="#222"/></svg>
<svg class="a" style="left:565px;top:283px;" width="20" height="18" viewBox="0 0 20 18"><rect x="0.5" y="0.5" width="15" height="14" fill="#fff" stroke="#999"/>
<path d="M0.5 4 H15.5 M0.5 8 H15.5 M0.5 11.5 H15.5 M3.5 0.5 V14.5 M12.5 0.5 V14.5" stroke="#ccc"/>
<rect x="4" y="4" width="8" height="4" fill="#efc77c"/></svg>
<div class="mi2" style="left:596px;top:287px"><u>N</u>ew Rule...</div>
<svg class="a" style="left:565px;top:309px;" width="20" height="18" viewBox="0 0 20 18"><rect x="0.5" y="0.5" width="15" height="14" fill="#fff" stroke="#999"/>
<path d="M0.5 4 H15.5 M0.5 8 H15.5 M0.5 11.5 H15.5 M3.5 0.5 V14.5 M12.5 0.5 V14.5" stroke="#ccc"/>
<rect x="4" y="4" width="8" height="4" fill="#efc77c"/><path d="M8 16 L14 10 L18 13 L12 18 Z" fill="#e8748a"/></svg>
<div class="mi2" style="left:596px;top:313px"><u>C</u>lear Rules</div>
<svg class="a" style="left:564px;top:335px;" width="20" height="18" viewBox="0 0 20 18"><rect x="0.5" y="0.5" width="16" height="15" fill="#ddd" stroke="#999"/><rect x="2.5" y="2.5" width="15" height="14" fill="#fff" stroke="#999"/>
<path d="M2.5 6 H17.5 M2.5 10 H17.5 M2.5 13.5 H17.5 M5.5 2.5 V16.5 M14.5 2.5 V16.5" stroke="#ccc"/>
<rect x="6" y="6" width="8" height="4" fill="#efc77c"/></svg>
<div class="mi2" style="left:596px;top:340px">Manage <u>R</u>ules...</div>
<div class="redbox" style="left:558px;top:43px;width:183px;height:24px"></div>
<div class="redbox" style="left:559px;top:277px;width:132px;height:28px"></div>
<div class="circ" style="left:516px;top:272px;width:32px;height:32px;line-height:32px">4</div>
</body></html>
